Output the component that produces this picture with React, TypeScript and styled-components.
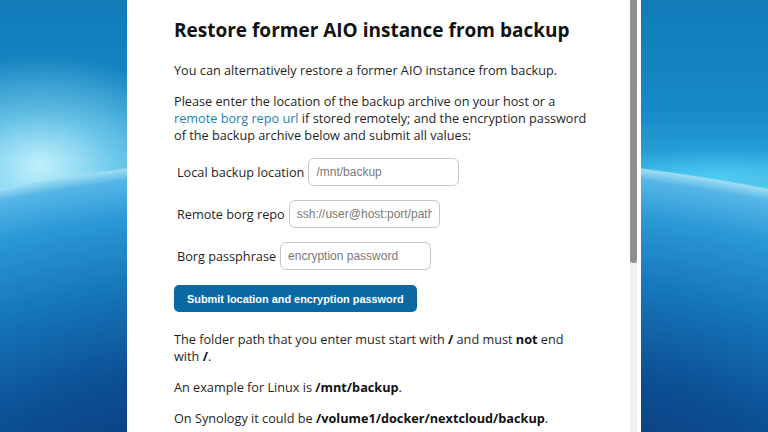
import styled, { createGlobalStyle } from "styled-components";

const GlobalStyle = createGlobalStyle`
  html, body {
    margin: 0;
    padding: 0;
    height: 100%;
    overflow: hidden;
  }
  body {
    font-family: "Open Sans", "Noto Sans", sans-serif;
    color: #1f1f1f;
  }
`;

// visible part of the page vs total height of the form page
const viewRatio = 263 / 432;

export default function App() {
  return (
    <Page>
      <GlobalStyle />
      <Panel>
        <Scroller>
          <Content>
            <Title>Restore former AIO instance from backup</Title>
            <Text>You can alternatively restore a former AIO instance from backup.</Text>
            <Text>
              Please enter the location of the backup archive on your host or a{" "}
              <Link href="#">remote borg repo url</Link> if stored remotely; and the encryption
              password of the backup archive below and submit all values:
            </Text>
            <Form onSubmit={(e) => e.preventDefault()}>
              <Row>
                <Label>Local backup location</Label>
                <Input type="text" placeholder="/mnt/backup" />
              </Row>
              <Row>
                <Label>Remote borg repo</Label>
                <Input type="text" placeholder="ssh://user@host:port/path/to/repo" />
              </Row>
              <Row>
                <Label>Borg passphrase</Label>
                <Input type="password" placeholder="encryption password" />
              </Row>
              <Button type="submit">Submit location and encryption password</Button>
            </Form>
            <Text>
              The folder path that you enter must start with <b>/</b> and must <b>not</b> end
              with <b>/</b>.
            </Text>
            <Text>
              An example for Linux is <b>/mnt/backup</b>.
            </Text>
            <Text>
              On Synology it could be <b>/volume1/docker/nextcloud/backup</b>.
            </Text>
            <Text>
              For macOS it may be <b>/var/backup</b>.
            </Text>
            <Text>
              On Windows it might be <b>/run/desktop/mnt/host/c/backup</b>.
            </Text>
            <Text>
              The remote borg repo url must look like <b>ssh://user@host:port/path/to/repo</b>.
            </Text>
            <Text>
              Please note that the restore can take a long time depending on the size of the
              backup archive.
            </Text>
          </Content>
        </Scroller>
        <ScrollTrack>
          <ScrollThumb style={{ height: `${viewRatio * 100}%` }} />
        </ScrollTrack>
      </Panel>
    </Page>
  );
}

const Page = styled.div`
  height: 100vh;
  display: flex;
  justify-content: center;
  background-color: #0b3f7e;
  background-image:
    radial-gradient(ellipse 926px 400px at 384px 552px,
      #082f66 0%,
      #0a3a78 30%,
      #0c4f94 52%,
      #1677bb 72%,
      #2b98d6 88%,
      #55b6e6 97%,
      #9ddcf3 99.6%,
      rgba(160, 225, 245, 0) 100%),
    radial-gradient(ellipse 170px 110px at 40px 165px,
      rgba(200, 245, 252, 0.95) 0%,
      rgba(150, 225, 245, 0.6) 45%,
      rgba(120, 210, 240, 0) 100%),
    radial-gradient(ellipse 140px 30px at 720px 178px,
      rgba(80, 210, 245, 0.8) 0%,
      rgba(60, 190, 235, 0) 100%),
    linear-gradient(180deg, #117bb8 0%, #1689c6 25%, #2aa3dc 38%, #5ec0ea 45%);
`;

const Panel = styled.div`
  width: 514px;
  height: 100%;
  padding-right: 4px;
  box-sizing: border-box;
  background: #ffffff;
  flex-shrink: 0;
  display: flex;
`;

const Scroller = styled.div`
  flex: 1;
  height: 100%;
  overflow: hidden;
`;

const ScrollTrack = styled.div`
  width: 7px;
  height: 100%;
  background: #f0f0f0;
`;

const ScrollThumb = styled.div`
  width: 100%;
  background: #8f8f8f;
  border-radius: 0 0 3px 3px;
`;

const Content = styled.div`
  width: 418px;
  padding: 16px 0 40px 47px;
  font-size: 12.7px;
  line-height: 17px;
`;

const Title = styled.h2`
  margin: 0 0 18px;
  font-size: 19px;
  line-height: 28px;
  font-weight: 700;
  color: #111111;
`;

const Text = styled.p`
  margin: 0 0 14px;

  b {
    font-weight: 700;
    color: #111111;
  }
`;

const Link = styled.a`
  color: #1f7fc0;
  text-decoration: none;
`;

const Form = styled.form`
  display: flex;
  flex-direction: column;
  align-items: flex-start;
  gap: 14px;
  margin: 0 0 18px;
`;

const Row = styled.div`
  display: flex;
  align-items: center;
  gap: 4px;
`;

const Label = styled.label`
  padding-left: 3px;
`;

const Input = styled.input`
  width: 151px;
  height: 28px;
  box-sizing: border-box;
  padding: 0 7px;
  border: 1px solid #c6c6c6;
  border-radius: 6px;
  font-family: "Liberation Sans", Arial, sans-serif;
  font-size: 12px;
  color: #222222;
  outline: none;

  &::placeholder {
    color: #7a7a7a;
  }
`;

const Button = styled.button`
  height: 27px;
  margin: 1px 0 1px;
  padding: 0 13px;
  border: none;
  border-radius: 5px;
  background: #0a69a5;
  color: #ffffff;
  font-family: "Liberation Sans", Arial, sans-serif;
  font-size: 10.9px;
  font-weight: 700;
  cursor: pointer;
`;
